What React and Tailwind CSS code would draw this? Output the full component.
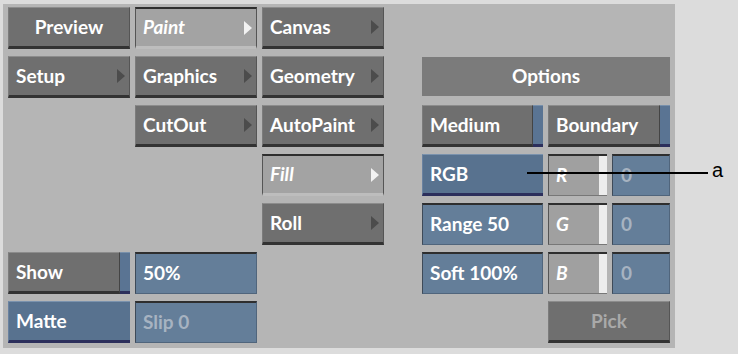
import React from "react";

const font = { fontFamily: "Lato, 'Open Sans', sans-serif" };

function Arrow({ light }) {
  return (
    <svg width="8" height="14" viewBox="0 0 8 14" className="absolute right-[4px] top-[12px]">
      <path d="M0 0 L8 7 L0 14 Z" fill={light ? "#f2f2f2" : "#4c4c4c"} />
    </svg>
  );
}

function GrayBtn({ label, arrow, center, dim }) {
  return (
    <div
      className={`relative h-[42px] bg-[#6f6f6f] border-t border-t-[#8c8c8c] border-l border-l-[#7c7c7c] border-r border-r-[#555] border-b-[3px] border-b-[#333] flex items-center text-[19px] font-bold ${
        center ? "justify-center" : "pl-[7px]"
      } ${dim ? "text-[#a9a9a9]" : "text-white"}`}
    >
      {label}
      {arrow && <Arrow />}
    </div>
  );
}

function PressedBtn({ label }) {
  return (
    <div className="relative h-[42px] bg-[#a3a3a3] border-t-2 border-t-[#2e2e2e] border-l border-l-[#555] border-r border-r-[#555] border-b-[3px] border-b-[#bdbdbd] flex items-center pl-[7px] text-[19px] font-bold italic text-white">
      {label}
      <Arrow light />
    </div>
  );
}

function ToggleBtn({ label }) {
  return (
    <div className="h-[42px] flex">
      <div className="flex-1 bg-[#6f6f6f] border-t border-t-[#8c8c8c] border-l border-l-[#7c7c7c] border-r border-r-[#444] border-b-[3px] border-b-[#333] flex items-center pl-[7px] text-[19px] font-bold text-white">
        {label}
      </div>
      <div className="w-[10px] bg-[#5a7493] border-t border-t-[#7890ab] border-b-[3px] border-b-[#2c2f5c]" />
    </div>
  );
}

function BlueBtn({ label }) {
  return (
    <div className="h-[42px] bg-[#58728f] border-t border-t-[#7a92ad] border-l border-l-[#6a82a0] border-b-[3px] border-b-[#2c2f5c] flex items-center pl-[7px] text-[19px] font-bold text-white">
      {label}
    </div>
  );
}

function Field({ label, dim, center }) {
  return (
    <div
      className={`h-[42px] bg-[#647e99] border-t-2 border-t-[#2e2e2e] border-l border-l-[#3e4a58] border-r border-r-[#50657c] border-b border-b-[#50657c] flex items-center text-[19px] font-bold ${
        center ? "pl-[8px]" : "pl-[7px]"
      } ${dim ? "text-[#a7b3c1]" : "text-white"}`}
    >
      {label}
    </div>
  );
}

function Channel({ label }) {
  return (
    <div className="h-[42px] flex border-t-2 border-t-[#2e2e2e] border-l border-l-[#555] border-b border-b-[#777]">
      <div className="flex-1 bg-[#a0a0a0] flex items-center pl-[7px] text-[19px] font-bold italic text-white">
        {label}
      </div>
      <div className="w-[8px] bg-[#ededed]" />
    </div>
  );
}

export default function App() {
  return (
    <div className="relative w-[738px] h-[354px] bg-[#dcdcdc] overflow-hidden" style={font}>
      <div className="absolute left-[3px] top-[4px] w-[672px] h-[344px] bg-[#b5b5b5]" />
      <div className="relative flex pl-[8px] pt-[7px]">
        <div className="grid grid-cols-[122px_122px_122px] grid-rows-[repeat(7,42px)] gap-x-[5px] gap-y-[7px]">
          <GrayBtn label="Preview" center />
          <PressedBtn label="Paint" />
          <GrayBtn label="Canvas" arrow />

          <GrayBtn label="Setup" arrow />
          <GrayBtn label="Graphics" arrow />
          <GrayBtn label="Geometry" arrow />

          <div />
          <GrayBtn label="CutOut" arrow />
          <GrayBtn label="AutoPaint" arrow />

          <div />
          <div />
          <PressedBtn label="Fill" />

          <div />
          <div />
          <GrayBtn label="Roll" arrow />

          <ToggleBtn label="Show" />
          <Field label="50%" />
          <div />

          <BlueBtn label="Matte" />
          <Field label="Slip 0" dim />
          <div />
        </div>

        <div className="ml-[38px] grid grid-cols-[121px_59px_58px] grid-rows-[repeat(7,42px)] gap-x-[5px] gap-y-[7px]">
          <div className="col-span-3" />

          <div className="col-span-3 h-[39px] mt-[1px] bg-[#7b7b7b] flex items-center justify-center text-[19px] font-bold text-white">
            Options
          </div>

          <ToggleBtn label="Medium" />
          <div className="col-span-2">
            <ToggleBtn label="Boundary" />
          </div>

          <BlueBtn label="RGB" />
          <Channel label="R" />
          <Field label="0" dim center />

          <Field label="Range 50" />
          <Channel label="G" />
          <Field label="0" dim center />

          <Field label="Soft 100%" />
          <Channel label="B" />
          <Field label="0" dim center />

          <div />
          <div className="col-span-2">
            <GrayBtn label="Pick" center dim />
          </div>
        </div>
      </div>

      <div className="absolute left-[527px] top-[172px] w-[181px] h-[2px] bg-black" />
      <div
        className="absolute left-[712px] top-[160px] text-[20px] text-black leading-none"
        style={{ fontFamily: "'Liberation Sans', Arial, sans-serif" }}
      >
        a
      </div>
    </div>
  );
}
